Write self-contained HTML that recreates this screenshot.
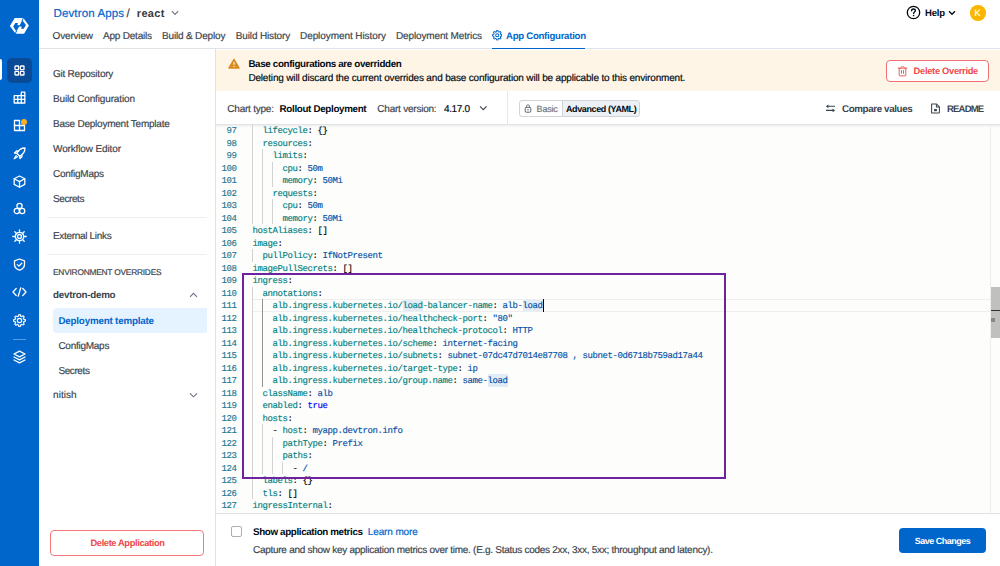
<!DOCTYPE html>
<html><head><meta charset="utf-8">
<style>
*{box-sizing:border-box;margin:0;padding:0}
html,body{width:1000px;height:566px;overflow:hidden;background:#fff;font-family:"Liberation Sans",sans-serif;color:#3b444c}
.abs{position:absolute}
.t{position:absolute;white-space:pre;line-height:1;text-rendering:geometricPrecision}
</style></head><body>
<div class="abs" style="left:0px;top:0px;width:39px;height:566px;background:#0066cc"></div>
<svg class="abs" style="left:0;top:0" width="39" height="50" viewBox="0 0 39 50">
<path d="M14.7 17.9 L23.3 17.9 L28.9 25.6 L24.1 33.7 L15.6 33.7 L9.9 26.1 Z" fill="#fff"/>
<path d="M13.2 26.4 L15.4 22.9 L18.0 22.9 L17.3 25.3 L19.7 25.3 L22.3 20.3 L25.9 25.0 L23.7 28.8 L21.0 28.8 L21.7 26.5 L19.2 26.5 L16.3 31.4 Z" fill="#0066cc"/>
<path d="M22.1 20.9 L23.6 17.4 M16.5 30.9 L15.1 34.2" stroke="#0066cc" stroke-width="1.0"/>
</svg>
<div class="abs" style="left:0px;top:59px;width:2px;height:21px;background:#fff;border-radius:0 2px 2px 0"></div>
<div class="abs" style="left:7px;top:58px;width:25px;height:24.5px;background:#0b4a96;border-radius:5px"></div>
<svg class="abs" style="left:14px;top:65px" width="11" height="11" viewBox="0 0 11 11" fill="none" stroke="#fff" stroke-width="1.3" stroke-linecap="round" stroke-linejoin="round">
<rect x="1" y="1" width="3.6" height="3.6" rx=".6"/><rect x="6.4" y="1" width="3.6" height="3.6" rx=".6"/>
<rect x="1" y="6.4" width="3.6" height="3.6" rx=".6"/><rect x="6.4" y="6.4" width="3.6" height="3.6" rx=".6"/></svg>
<svg class="abs" style="left:13px;top:91px" width="13" height="13" viewBox="0 0 13 13" fill="none" stroke="#fff" stroke-width="1.3" stroke-linecap="round" stroke-linejoin="round">
<path d="M1.2 12 L11.8 12 L11.8 1.2 L8.3 1.2 L8.3 4.7 L1.2 4.7 Z"/><path d="M1.2 8.35 L11.8 8.35 M8.3 4.7 L11.8 4.7 M4.75 4.7 L4.75 12 M8.3 4.7 L8.3 12"/></svg>
<svg class="abs" style="left:13px;top:118px" width="14" height="14" viewBox="0 0 14 14" fill="none" stroke="#fff" stroke-width="1.3" stroke-linecap="round" stroke-linejoin="round">
<path d="M1.5 6.5 L1.5 12.5 L11.5 12.5 L11.5 8.5"/><path d="M1.5 2.5 L6.5 2.5 L6.5 12.5 M1.5 7.5 L11.5 7.5"/><path d="M1.5 2.5 L1.5 7.5"/></svg>
<div class="abs" style="left:20.5px;top:118.5px;width:6px;height:6px;background:#fdb022;border-radius:50%"></div>
<svg class="abs" style="left:13px;top:147px" width="13" height="13" viewBox="0 0 13 13" fill="none" stroke="#fff" stroke-width="1.3" stroke-linecap="round" stroke-linejoin="round">
<path d="M12 1 C8 1 5.5 3 3.8 6.3 L6.7 9.2 C10 7.5 12 5 12 1 Z"/><path d="M3.8 6.3 L1.5 6 L3.5 4 L5.5 4.2 M6.7 9.2 L7 11.5 L9 9.5 L8.8 7.5"/><path d="M3.2 8.5 L1.2 11.8 L4.5 9.8"/></svg>
<svg class="abs" style="left:13px;top:175px" width="13" height="13" viewBox="0 0 13 13" fill="none" stroke="#fff" stroke-width="1.3" stroke-linecap="round" stroke-linejoin="round">
<path d="M6.5 1 L11.8 3.8 L11.8 9.4 L6.5 12.2 L1.2 9.4 L1.2 3.8 Z"/><path d="M1.2 3.8 L6.5 6.6 L11.8 3.8 M6.5 6.6 L6.5 12.2"/></svg>
<svg class="abs" style="left:13px;top:202px" width="13" height="13" viewBox="0 0 13 13" fill="none" stroke="#fff" stroke-width="1.3" stroke-linecap="round" stroke-linejoin="round">
<circle cx="6.5" cy="3.9" r="2.6"/><circle cx="3.8" cy="9" r="2.6"/><circle cx="9.2" cy="9" r="2.6"/></svg>
<svg class="abs" style="left:12px;top:229px" width="15" height="15" viewBox="0 0 15 15" fill="none" stroke="#fff" stroke-width="1.3" stroke-linecap="round" stroke-linejoin="round">
<circle cx="7.5" cy="7.5" r="4.2"/><circle cx="7.5" cy="7.5" r="2"/><path d="M7.5 0.8 L7.5 3.3 M7.5 11.7 L7.5 14.2 M0.8 7.5 L3.3 7.5 M11.7 7.5 L14.2 7.5 M2.8 2.8 L4.5 4.5 M10.5 10.5 L12.2 12.2 M2.8 12.2 L4.5 10.5 M10.5 4.5 L12.2 2.8"/></svg>
<svg class="abs" style="left:13px;top:258px" width="13" height="13" viewBox="0 0 13 13" fill="none" stroke="#fff" stroke-width="1.3" stroke-linecap="round" stroke-linejoin="round">
<path d="M6.5 1 L11.5 2.8 L11.5 6.5 C11.5 9.2 9.2 11.2 6.5 12.2 C3.8 11.2 1.5 9.2 1.5 6.5 L1.5 2.8 Z"/><path d="M4.3 6.6 L5.9 8.1 L8.8 5.2"/></svg>
<svg class="abs" style="left:12px;top:287px" width="15" height="10" viewBox="0 0 15 10" fill="none" stroke="#fff" stroke-width="1.3" stroke-linecap="round" stroke-linejoin="round">
<path d="M4.2 1.5 L1 5 L4.2 8.5 M10.8 1.5 L14 5 L10.8 8.5 M8.8 0.8 L6.2 9.2"/></svg>
<svg class="abs" style="left:13px;top:313.5px" width="13" height="13" viewBox="0 0 24 24" fill="none" stroke="#fff" stroke-width="2.2"><circle cx="12" cy="12" r="4"/><path d="M19.4 15a1.65 1.65 0 0 0 .33 1.82l.06.06a2 2 0 0 1 0 2.83 2 2 0 0 1-2.83 0l-.06-.06a1.650 1.65 0 0 0-1.82-.33 1.65 1.65 0 0 0-1 1.51V21a2 2 0 0 1-2 2 2 2 0 0 1-2-2v-.09A1.65 1.65 0 0 0 9 19.4a1.65 1.65 0 0 0-1.82.33l-.06.06a2 2 0 0 1-2.83 0 2 2 0 0 1 0-2.830l.06-.06a1.65 1.65 0 0 0 .33-1.82 1.65 1.65 0 0 0-1.51-1H3a2 2 0 0 1-2-2 2 2 0 0 1 2-2h.09A1.65 1.65 0 0 0 4.6 9a1.65 1.65 0 0 0-.33-1.82l-.06-.06a2 2 0 0 1 0-2.83 2 2 0 0 1 2.83 0l.06.06a1.65 1.65 0 0 0 1.82.33H9a1.65 1.65 0 0 0 1-1.51V3a2 2 0 0 1 2-2 2 2 0 0 1 2 2v.09a1.65 1.65 0 0 0 1 1.51 1.65 1.65 0 0 0 1.82-.33l.06-.06a2 2 0 0 1 2.83 0 2 2 0 0 1 0 2.83l-.06.06a1.65 1.65 0 0 0-.33 1.82V9a1.65 1.65 0 0 0 1.51 1H21a2 2 0 0 1 2 2 2 2 0 0 1-2 2h-.09a1.65 1.65 0 0 0-1.51 1z"/></svg>
<div class="abs" style="left:13px;top:339px;width:13px;height:1px;background:rgba(255,255,255,.35)"></div>
<svg class="abs" style="left:13px;top:350px" width="13" height="15" viewBox="0 0 13 15" fill="none" stroke="#fff" stroke-width="1.3" stroke-linecap="round" stroke-linejoin="round">
<path d="M6.5 1.2 L12 4 L6.5 6.8 L1 4 Z"/><path d="M1 7 L6.5 9.8 L12 7 M1 10 L6.5 12.8 L12 10"/></svg>
<div class="abs" style="left:39px;top:0px;width:961px;height:49px;background:#fff;border-bottom:1px solid #dfe3e8"></div>
<div class="t" style="left:53.50px;top:8.70px;font-size:11.5px;font-weight:400;color:#0066cc;letter-spacing:0.141px;-webkit-text-stroke:0.18px currentColor;">Devtron Apps</div>
<div class="t" style="left:126.50px;top:7.70px;font-size:11.6px;font-weight:400;color:#3b444c;-webkit-text-stroke:0.18px currentColor;">/</div>
<div class="t" style="left:136.80px;top:8.70px;font-size:11px;font-weight:700;color:#363b41;letter-spacing:0.326px;">react</div>
<svg class="abs" style="left:171px;top:10px" width="8" height="6" viewBox="0 0 8 6"><path d="M0.8 1.2 L4 4.4 L7.2 1.2" fill="none" stroke="#6b7280" stroke-width="1.1"/></svg>
<div class="t" style="left:52.60px;top:32.30px;font-size:10px;font-weight:400;color:#3b444c;letter-spacing:-0.184px;-webkit-text-stroke:0.18px currentColor;">Overview</div>
<div class="t" style="left:103.00px;top:32.30px;font-size:10px;font-weight:400;color:#3b444c;letter-spacing:-0.214px;-webkit-text-stroke:0.18px currentColor;">App Details</div>
<div class="t" style="left:162.00px;top:32.30px;font-size:10px;font-weight:400;color:#3b444c;letter-spacing:-0.169px;-webkit-text-stroke:0.18px currentColor;">Build &amp; Deploy</div>
<div class="t" style="left:235.80px;top:32.30px;font-size:10px;font-weight:400;color:#3b444c;letter-spacing:-0.145px;-webkit-text-stroke:0.18px currentColor;">Build History</div>
<div class="t" style="left:300.00px;top:32.30px;font-size:10px;font-weight:400;color:#3b444c;letter-spacing:-0.074px;-webkit-text-stroke:0.18px currentColor;">Deployment History</div>
<div class="t" style="left:396.00px;top:32.30px;font-size:10px;font-weight:400;color:#3b444c;letter-spacing:-0.139px;-webkit-text-stroke:0.18px currentColor;">Deployment Metrics</div>
<svg class="abs" style="left:491.5px;top:30.3px" width="10.5" height="10.5" viewBox="0 0 24 24" fill="none" stroke="#0066cc" stroke-width="2.3"><circle cx="12" cy="12" r="3.6"/><path d="M19.4 15a1.65 1.65 0 0 0 .33 1.82l.06.06a2 2 0 0 1 0 2.83 2 2 0 0 1-2.83 0l-.06-.06a1.650 1.65 0 0 0-1.82-.33 1.65 1.65 0 0 0-1 1.51V21a2 2 0 0 1-2 2 2 2 0 0 1-2-2v-.09A1.65 1.65 0 0 0 9 19.4a1.65 1.65 0 0 0-1.82.33l-.06.06a2 2 0 0 1-2.83 0 2 2 0 0 1 0-2.830l.06-.06a1.65 1.65 0 0 0 .33-1.82 1.65 1.65 0 0 0-1.51-1H3a2 2 0 0 1-2-2 2 2 0 0 1 2-2h.09A1.65 1.65 0 0 0 4.6 9a1.65 1.65 0 0 0-.33-1.82l-.06-.06a2 2 0 0 1 0-2.83 2 2 0 0 1 2.83 0l.06.06a1.65 1.65 0 0 0 1.82.33H9a1.65 1.65 0 0 0 1-1.51V3a2 2 0 0 1 2-2 2 2 0 0 1 2 2v.09a1.65 1.65 0 0 0 1 1.51 1.65 1.65 0 0 0 1.82-.33l.06-.06a2 2 0 0 1 2.83 0 2 2 0 0 1 0 2.83l-.06.06a1.65 1.65 0 0 0-.33 1.82V9a1.65 1.65 0 0 0 1.51 1H21a2 2 0 0 1 2 2 2 2 0 0 1-2 2h-.09a1.65 1.65 0 0 0-1.51 1z"/></svg>
<div class="t" style="left:506.00px;top:32.30px;font-size:9.6px;font-weight:700;color:#0066cc;letter-spacing:-0.263px;">App Configuration</div>
<div class="abs" style="left:492px;top:47.6px;width:93px;height:1.8px;background:#0066cc"></div>
<svg class="abs" style="left:906px;top:5px" width="15" height="15" viewBox="0 0 15 15"><circle cx="7.5" cy="7.5" r="6.2" fill="none" stroke="#000a14" stroke-width="1.3"/><path d="M5.6 5.8 C5.6 4.6 6.5 4 7.5 4 C8.6 4 9.4 4.7 9.4 5.6 C9.4 6.8 7.6 7 7.6 8.4" fill="none" stroke="#000a14" stroke-width="1.3" stroke-linecap="round"/><circle cx="7.6" cy="10.6" r=".8" fill="#000a14"/></svg>
<div class="t" style="left:925.00px;top:9.00px;font-size:9.5px;font-weight:700;color:#000a14;letter-spacing:-0.198px;">Help</div>
<svg class="abs" style="left:948px;top:10px" width="8" height="6" viewBox="0 0 8 6"><path d="M1 1.3 L4 4.3 L7 1.3" fill="none" stroke="#000a14" stroke-width="1.3"/></svg>
<div class="abs" style="left:970px;top:5px;width:15.5px;height:15.5px;background:#fbb700;border-radius:50%"></div>
<div class="t" style="left:974.50px;top:9.20px;font-size:9px;font-weight:400;color:#fff;-webkit-text-stroke:0.18px currentColor;">K</div>
<div class="abs" style="left:39px;top:49px;width:177px;height:517px;background:#fff;border-right:1px solid #dfe3e8"></div>
<div class="t" style="left:53.00px;top:70.20px;font-size:10px;font-weight:400;color:#3b444c;letter-spacing:-0.235px;-webkit-text-stroke:0.18px currentColor;">Git Repository</div>
<div class="t" style="left:53.00px;top:95.20px;font-size:10px;font-weight:400;color:#3b444c;letter-spacing:-0.139px;-webkit-text-stroke:0.18px currentColor;">Build Configuration</div>
<div class="t" style="left:53.00px;top:120.20px;font-size:10px;font-weight:400;color:#3b444c;letter-spacing:-0.231px;-webkit-text-stroke:0.18px currentColor;">Base Deployment Template</div>
<div class="t" style="left:53.00px;top:145.20px;font-size:10px;font-weight:400;color:#3b444c;letter-spacing:-0.132px;-webkit-text-stroke:0.18px currentColor;">Workflow Editor</div>
<div class="t" style="left:53.00px;top:170.20px;font-size:10px;font-weight:400;color:#3b444c;letter-spacing:-0.262px;-webkit-text-stroke:0.18px currentColor;">ConfigMaps</div>
<div class="t" style="left:53.00px;top:195.20px;font-size:10px;font-weight:400;color:#3b444c;letter-spacing:-0.401px;-webkit-text-stroke:0.18px currentColor;">Secrets</div>
<div class="abs" style="left:47px;top:216.5px;width:160px;height:1px;background:#eef0f2"></div>
<div class="t" style="left:53.00px;top:232.00px;font-size:10px;font-weight:400;color:#3b444c;letter-spacing:-0.316px;-webkit-text-stroke:0.18px currentColor;">External Links</div>
<div class="abs" style="left:47px;top:254px;width:160px;height:1px;background:#eef0f2"></div>
<div class="t" style="left:53.00px;top:268.20px;font-size:8.4px;font-weight:400;color:#3b444c;letter-spacing:-0.240px;-webkit-text-stroke:0.18px currentColor;">ENVIRONMENT OVERRIDES</div>
<div class="t" style="left:53.00px;top:291.40px;font-size:9.8px;font-weight:700;color:#3b444c;letter-spacing:-0.248px;">devtron-demo</div>
<svg class="abs" style="left:188.5px;top:292px" width="9" height="6" viewBox="0 0 9 6"><path d="M1 4.8 L4.5 1.3 L8 4.8" fill="none" stroke="#6b7280" stroke-width="1.1"/></svg>
<div class="abs" style="left:53px;top:308px;width:154px;height:24.5px;background:#e5f2ff;border-radius:4px 0 0 4px"></div>
<div class="t" style="left:58.40px;top:316.50px;font-size:9.8px;font-weight:700;color:#0066cc;letter-spacing:-0.189px;">Deployment template</div>
<div class="t" style="left:58.40px;top:341.50px;font-size:10px;font-weight:400;color:#3b444c;letter-spacing:-0.262px;-webkit-text-stroke:0.18px currentColor;">ConfigMaps</div>
<div class="t" style="left:58.40px;top:366.50px;font-size:10px;font-weight:400;color:#3b444c;letter-spacing:-0.401px;-webkit-text-stroke:0.18px currentColor;">Secrets</div>
<div class="t" style="left:53.00px;top:391.30px;font-size:10px;font-weight:400;color:#3b444c;letter-spacing:0.068px;-webkit-text-stroke:0.18px currentColor;">nitish</div>
<svg class="abs" style="left:188.5px;top:392px" width="9" height="6" viewBox="0 0 9 6"><path d="M1 1.3 L4.5 4.8 L8 1.3" fill="none" stroke="#6b7280" stroke-width="1.1"/></svg>
<div class="abs" style="left:50px;top:530px;width:154px;height:25.5px;border:1px solid #f27a7a;border-radius:4px;background:#fff"></div>
<div class="t" style="left:90.50px;top:539.20px;font-size:9.3px;font-weight:700;color:#f04848;letter-spacing:-0.374px;">Delete Application</div>
<div class="abs" style="left:216px;top:50px;width:784px;height:41px;background:#fef5e6"></div>
<svg class="abs" style="left:228px;top:58px" width="12" height="11" viewBox="0 0 12 11"><path d="M6 1.3 L11.1 10.1 L0.9 10.1 Z" fill="#d98c1f" stroke="#d98c1f" stroke-width="1.3" stroke-linejoin="round"/><rect x="5.4" y="4" width="1.2" height="2.8" fill="#fef5e6"/><rect x="5.4" y="7.9" width="1.2" height="1.1" fill="#fef5e6"/></svg>
<div class="t" style="left:248.40px;top:60.30px;font-size:9.8px;font-weight:700;color:#000a14;letter-spacing:-0.351px;">Base configurations are overridden</div>
<div class="t" style="left:248.40px;top:74.20px;font-size:10px;font-weight:400;color:#000a14;letter-spacing:-0.174px;-webkit-text-stroke:0.18px currentColor;">Deleting will discard the current overrides and base configuration will be applicable to this environment.</div>
<div class="abs" style="left:885.5px;top:60px;width:103.5px;height:21.5px;border:1px solid #f17171;border-radius:4px;background:#fff"></div>
<svg class="abs" style="left:897px;top:64.8px" width="11" height="12" viewBox="0 0 11 12" fill="none" stroke="#f05252" stroke-width="0.95" stroke-linecap="round" stroke-linejoin="round"><path d="M1.2 3.2 L9.8 3.2 M3.4 3.1 C3.6 0.9 7.4 0.9 7.6 3.1 M2.2 3.2 L2.2 10 Q2.2 10.9 3.1 10.9 L7.9 10.9 Q8.8 10.9 8.8 10 L8.8 3.2 M4.5 5.5 L4.5 8.3 M6.5 5.5 L6.5 8.3"/></svg>
<div class="t" style="left:913.60px;top:67.00px;font-size:9.3px;font-weight:700;color:#f04848;letter-spacing:-0.288px;">Delete Override</div>
<div class="abs" style="left:216px;top:91px;width:784px;height:34px;background:#fff;border-bottom:1px solid #dfe3e8"></div>
<div class="t" style="left:227.30px;top:104.80px;font-size:10px;font-weight:400;color:#3b444c;letter-spacing:-0.222px;-webkit-text-stroke:0.18px currentColor;">Chart type:</div>
<div class="t" style="left:279.60px;top:104.80px;font-size:9.8px;font-weight:700;color:#000a14;letter-spacing:-0.325px;">Rollout Deployment</div>
<div class="t" style="left:377.30px;top:104.80px;font-size:10px;font-weight:400;color:#3b444c;letter-spacing:-0.227px;-webkit-text-stroke:0.18px currentColor;">Chart version:</div>
<div class="t" style="left:444.00px;top:104.80px;font-size:10px;font-weight:400;color:#000a14;letter-spacing:-0.362px;-webkit-text-stroke:0.18px currentColor;">4.17.0</div>
<svg class="abs" style="left:479px;top:105px" width="9" height="6" viewBox="0 0 9 6"><path d="M1 1.3 L4.3 4.6 L7.6 1.3" fill="none" stroke="#3b444c" stroke-width="1.1"/></svg>
<div class="abs" style="left:507px;top:91px;width:1px;height:34px;background:#e5e7eb"></div>
<div class="abs" style="left:519px;top:100.2px;width:121px;height:16.4px;border:1px solid #d0d4d9;border-radius:3px;background:#fff"></div>
<div class="abs" style="left:561.5px;top:101.2px;width:77.5px;height:14.4px;background:#edf1f5;border-left:1px solid #d0d4d9;border-radius:0 2px 2px 0"></div>
<svg class="abs" style="left:524px;top:104px" width="8" height="9" viewBox="0 0 8 9" fill="none" stroke="#5b636b" stroke-width="1"><rect x="1.2" y="3.3" width="5.6" height="4.9" rx="1"/><path d="M2.5 3.3 L2.5 2.4 C2.5 1.5 3.1 0.9 4 0.9 C4.9 0.9 5.5 1.5 5.5 2.4 L5.5 3.3"/><path d="M4 5 L4 6.5" stroke-width="1.1"/></svg>
<div class="t" style="left:536.60px;top:104.80px;font-size:9px;font-weight:400;color:#6b7279;letter-spacing:-0.204px;-webkit-text-stroke:0.18px currentColor;">Basic</div>
<div class="t" style="left:566.00px;top:104.80px;font-size:9px;font-weight:700;color:#000a14;letter-spacing:-0.392px;">Advanced (YAML)</div>
<svg class="abs" style="left:825px;top:103px" width="11" height="10" viewBox="0 0 11 10"><path d="M2.5 3.3 L10 3.3 M1 7.4 L8.5 7.4" stroke="#3b444c" stroke-width="1.1"/><path d="M0.9 3.3 L3.4 1.4 L3.4 5.2 Z M10.1 7.4 L7.6 5.5 L7.6 9.3 Z" fill="#3b444c"/></svg>
<div class="t" style="left:842.00px;top:105.40px;font-size:9.8px;font-weight:700;color:#3b444c;letter-spacing:-0.384px;">Compare values</div>
<svg class="abs" style="left:930px;top:103px" width="11" height="11" viewBox="0 0 11 11" fill="none" stroke="#3b444c" stroke-width="1.05" stroke-linejoin="round"><path d="M1.6 1 L6.6 1 L9.4 3.8 L9.4 9.5 Q9.4 10 8.9 10 L2.1 10 Q1.6 10 1.6 9.5 Z"/><path d="M6.4 1.2 L6.4 3.9 L9.2 3.9"/><rect x="4.1" y="6" width="2.8" height="2.2" fill="#3b444c" stroke="none"/></svg>
<div class="t" style="left:946.90px;top:105.40px;font-size:9.5px;font-weight:700;color:#3b444c;letter-spacing:-0.774px;">README</div>
<div class="abs" style="left:216px;top:125px;width:784px;height:388px;background:#fdfdfc;box-shadow:inset 0 4px 3px -3px rgba(0,0,0,.08)"></div>
<div class="abs" style="left:253px;top:299.2px;width:737px;height:12.5px;border-top:1px solid #eeeeee;border-bottom:1px solid #eeeeee"></div>
<div class="abs" style="left:402.5px;top:299.7px;width:20px;height:11.5px;background:#e1ecf7"></div>
<div class="abs" style="left:522.5px;top:299.7px;width:20px;height:11.5px;background:#e1ecf7"></div>
<div class="abs" style="left:487.5px;top:374.2px;width:20px;height:12.5px;background:#e1ecf7"></div>
<div class="abs" style="left:252.0px;top:124.2px;width:1px;height:12.5px;background:#d3d3d3"></div>
<div class="abs" style="left:252.0px;top:136.7px;width:1px;height:12.5px;background:#d3d3d3"></div>
<div class="abs" style="left:252.0px;top:149.2px;width:1px;height:12.5px;background:#d3d3d3"></div>
<div class="abs" style="left:262.0px;top:149.2px;width:1px;height:12.5px;background:#d3d3d3"></div>
<div class="abs" style="left:252.0px;top:161.7px;width:1px;height:12.5px;background:#d3d3d3"></div>
<div class="abs" style="left:262.0px;top:161.7px;width:1px;height:12.5px;background:#d3d3d3"></div>
<div class="abs" style="left:272.0px;top:161.7px;width:1px;height:12.5px;background:#d3d3d3"></div>
<div class="abs" style="left:252.0px;top:174.2px;width:1px;height:12.5px;background:#d3d3d3"></div>
<div class="abs" style="left:262.0px;top:174.2px;width:1px;height:12.5px;background:#d3d3d3"></div>
<div class="abs" style="left:272.0px;top:174.2px;width:1px;height:12.5px;background:#d3d3d3"></div>
<div class="abs" style="left:252.0px;top:186.7px;width:1px;height:12.5px;background:#d3d3d3"></div>
<div class="abs" style="left:262.0px;top:186.7px;width:1px;height:12.5px;background:#d3d3d3"></div>
<div class="abs" style="left:252.0px;top:199.2px;width:1px;height:12.5px;background:#d3d3d3"></div>
<div class="abs" style="left:262.0px;top:199.2px;width:1px;height:12.5px;background:#d3d3d3"></div>
<div class="abs" style="left:272.0px;top:199.2px;width:1px;height:12.5px;background:#d3d3d3"></div>
<div class="abs" style="left:252.0px;top:211.7px;width:1px;height:12.5px;background:#d3d3d3"></div>
<div class="abs" style="left:262.0px;top:211.7px;width:1px;height:12.5px;background:#d3d3d3"></div>
<div class="abs" style="left:272.0px;top:211.7px;width:1px;height:12.5px;background:#d3d3d3"></div>
<div class="abs" style="left:252.0px;top:249.2px;width:1px;height:12.5px;background:#d3d3d3"></div>
<div class="abs" style="left:252.0px;top:286.7px;width:1px;height:12.5px;background:#d3d3d3"></div>
<div class="abs" style="left:252.0px;top:299.2px;width:1px;height:12.5px;background:#d3d3d3"></div>
<div class="abs" style="left:262.0px;top:299.2px;width:1px;height:12.5px;background:#939393"></div>
<div class="abs" style="left:252.0px;top:311.7px;width:1px;height:12.5px;background:#d3d3d3"></div>
<div class="abs" style="left:262.0px;top:311.7px;width:1px;height:12.5px;background:#939393"></div>
<div class="abs" style="left:252.0px;top:324.2px;width:1px;height:12.5px;background:#d3d3d3"></div>
<div class="abs" style="left:262.0px;top:324.2px;width:1px;height:12.5px;background:#939393"></div>
<div class="abs" style="left:252.0px;top:336.7px;width:1px;height:12.5px;background:#d3d3d3"></div>
<div class="abs" style="left:262.0px;top:336.7px;width:1px;height:12.5px;background:#939393"></div>
<div class="abs" style="left:252.0px;top:349.2px;width:1px;height:12.5px;background:#d3d3d3"></div>
<div class="abs" style="left:262.0px;top:349.2px;width:1px;height:12.5px;background:#939393"></div>
<div class="abs" style="left:252.0px;top:361.7px;width:1px;height:12.5px;background:#d3d3d3"></div>
<div class="abs" style="left:262.0px;top:361.7px;width:1px;height:12.5px;background:#939393"></div>
<div class="abs" style="left:252.0px;top:374.2px;width:1px;height:12.5px;background:#d3d3d3"></div>
<div class="abs" style="left:262.0px;top:374.2px;width:1px;height:12.5px;background:#939393"></div>
<div class="abs" style="left:252.0px;top:386.7px;width:1px;height:12.5px;background:#d3d3d3"></div>
<div class="abs" style="left:252.0px;top:399.2px;width:1px;height:12.5px;background:#d3d3d3"></div>
<div class="abs" style="left:252.0px;top:411.7px;width:1px;height:12.5px;background:#d3d3d3"></div>
<div class="abs" style="left:252.0px;top:424.2px;width:1px;height:12.5px;background:#d3d3d3"></div>
<div class="abs" style="left:262.0px;top:424.2px;width:1px;height:12.5px;background:#d3d3d3"></div>
<div class="abs" style="left:252.0px;top:436.7px;width:1px;height:12.5px;background:#d3d3d3"></div>
<div class="abs" style="left:262.0px;top:436.7px;width:1px;height:12.5px;background:#d3d3d3"></div>
<div class="abs" style="left:272.0px;top:436.7px;width:1px;height:12.5px;background:#d3d3d3"></div>
<div class="abs" style="left:252.0px;top:449.2px;width:1px;height:12.5px;background:#d3d3d3"></div>
<div class="abs" style="left:262.0px;top:449.2px;width:1px;height:12.5px;background:#d3d3d3"></div>
<div class="abs" style="left:272.0px;top:449.2px;width:1px;height:12.5px;background:#d3d3d3"></div>
<div class="abs" style="left:252.0px;top:461.7px;width:1px;height:12.5px;background:#d3d3d3"></div>
<div class="abs" style="left:262.0px;top:461.7px;width:1px;height:12.5px;background:#d3d3d3"></div>
<div class="abs" style="left:272.0px;top:461.7px;width:1px;height:12.5px;background:#d3d3d3"></div>
<div class="abs" style="left:282.0px;top:461.7px;width:1px;height:12.5px;background:#d3d3d3"></div>
<div class="abs" style="left:252.0px;top:474.2px;width:1px;height:12.5px;background:#d3d3d3"></div>
<div class="abs" style="left:252.0px;top:486.7px;width:1px;height:12.5px;background:#d3d3d3"></div>
<div class="t" style="left:226.60px;top:127.00px;font-size:9.0px;font-weight:400;color:#237893;font-family:'Liberation Mono',monospace;letter-spacing:-0.4px;-webkit-text-stroke:0.15px">97</div>
<div class="t" style="left:262.50px;top:127.00px;font-size:9.0px;font-weight:400;color:#008080;font-family:'Liberation Mono',monospace;letter-spacing:-0.4px;-webkit-text-stroke:0.15px">lifecycle</div>
<div class="t" style="left:307.50px;top:127.00px;font-size:9.0px;font-weight:400;color:#000000;font-family:'Liberation Mono',monospace;letter-spacing:-0.4px;-webkit-text-stroke:0.15px">:</div>
<div class="t" style="left:317.50px;top:127.00px;font-size:9.0px;font-weight:400;color:#000000;font-family:'Liberation Mono',monospace;letter-spacing:-0.4px;-webkit-text-stroke:0.15px">{}</div>
<div class="t" style="left:226.60px;top:139.50px;font-size:9.0px;font-weight:400;color:#237893;font-family:'Liberation Mono',monospace;letter-spacing:-0.4px;-webkit-text-stroke:0.15px">98</div>
<div class="t" style="left:262.50px;top:139.50px;font-size:9.0px;font-weight:400;color:#008080;font-family:'Liberation Mono',monospace;letter-spacing:-0.4px;-webkit-text-stroke:0.15px">resources</div>
<div class="t" style="left:307.50px;top:139.50px;font-size:9.0px;font-weight:400;color:#000000;font-family:'Liberation Mono',monospace;letter-spacing:-0.4px;-webkit-text-stroke:0.15px">:</div>
<div class="t" style="left:226.60px;top:152.00px;font-size:9.0px;font-weight:400;color:#237893;font-family:'Liberation Mono',monospace;letter-spacing:-0.4px;-webkit-text-stroke:0.15px">99</div>
<div class="t" style="left:272.50px;top:152.00px;font-size:9.0px;font-weight:400;color:#008080;font-family:'Liberation Mono',monospace;letter-spacing:-0.4px;-webkit-text-stroke:0.15px">limits</div>
<div class="t" style="left:302.50px;top:152.00px;font-size:9.0px;font-weight:400;color:#000000;font-family:'Liberation Mono',monospace;letter-spacing:-0.4px;-webkit-text-stroke:0.15px">:</div>
<div class="t" style="left:221.60px;top:164.50px;font-size:9.0px;font-weight:400;color:#237893;font-family:'Liberation Mono',monospace;letter-spacing:-0.4px;-webkit-text-stroke:0.15px">100</div>
<div class="t" style="left:282.50px;top:164.50px;font-size:9.0px;font-weight:400;color:#008080;font-family:'Liberation Mono',monospace;letter-spacing:-0.4px;-webkit-text-stroke:0.15px">cpu</div>
<div class="t" style="left:297.50px;top:164.50px;font-size:9.0px;font-weight:400;color:#000000;font-family:'Liberation Mono',monospace;letter-spacing:-0.4px;-webkit-text-stroke:0.15px">:</div>
<div class="t" style="left:307.50px;top:164.50px;font-size:9.0px;font-weight:400;color:#0451a5;font-family:'Liberation Mono',monospace;letter-spacing:-0.4px;-webkit-text-stroke:0.15px">50m</div>
<div class="t" style="left:221.60px;top:177.00px;font-size:9.0px;font-weight:400;color:#237893;font-family:'Liberation Mono',monospace;letter-spacing:-0.4px;-webkit-text-stroke:0.15px">101</div>
<div class="t" style="left:282.50px;top:177.00px;font-size:9.0px;font-weight:400;color:#008080;font-family:'Liberation Mono',monospace;letter-spacing:-0.4px;-webkit-text-stroke:0.15px">memory</div>
<div class="t" style="left:312.50px;top:177.00px;font-size:9.0px;font-weight:400;color:#000000;font-family:'Liberation Mono',monospace;letter-spacing:-0.4px;-webkit-text-stroke:0.15px">:</div>
<div class="t" style="left:322.50px;top:177.00px;font-size:9.0px;font-weight:400;color:#0451a5;font-family:'Liberation Mono',monospace;letter-spacing:-0.4px;-webkit-text-stroke:0.15px">50Mi</div>
<div class="t" style="left:221.60px;top:189.50px;font-size:9.0px;font-weight:400;color:#237893;font-family:'Liberation Mono',monospace;letter-spacing:-0.4px;-webkit-text-stroke:0.15px">102</div>
<div class="t" style="left:272.50px;top:189.50px;font-size:9.0px;font-weight:400;color:#008080;font-family:'Liberation Mono',monospace;letter-spacing:-0.4px;-webkit-text-stroke:0.15px">requests</div>
<div class="t" style="left:312.50px;top:189.50px;font-size:9.0px;font-weight:400;color:#000000;font-family:'Liberation Mono',monospace;letter-spacing:-0.4px;-webkit-text-stroke:0.15px">:</div>
<div class="t" style="left:221.60px;top:202.00px;font-size:9.0px;font-weight:400;color:#237893;font-family:'Liberation Mono',monospace;letter-spacing:-0.4px;-webkit-text-stroke:0.15px">103</div>
<div class="t" style="left:282.50px;top:202.00px;font-size:9.0px;font-weight:400;color:#008080;font-family:'Liberation Mono',monospace;letter-spacing:-0.4px;-webkit-text-stroke:0.15px">cpu</div>
<div class="t" style="left:297.50px;top:202.00px;font-size:9.0px;font-weight:400;color:#000000;font-family:'Liberation Mono',monospace;letter-spacing:-0.4px;-webkit-text-stroke:0.15px">:</div>
<div class="t" style="left:307.50px;top:202.00px;font-size:9.0px;font-weight:400;color:#0451a5;font-family:'Liberation Mono',monospace;letter-spacing:-0.4px;-webkit-text-stroke:0.15px">50m</div>
<div class="t" style="left:221.60px;top:214.50px;font-size:9.0px;font-weight:400;color:#237893;font-family:'Liberation Mono',monospace;letter-spacing:-0.4px;-webkit-text-stroke:0.15px">104</div>
<div class="t" style="left:282.50px;top:214.50px;font-size:9.0px;font-weight:400;color:#008080;font-family:'Liberation Mono',monospace;letter-spacing:-0.4px;-webkit-text-stroke:0.15px">memory</div>
<div class="t" style="left:312.50px;top:214.50px;font-size:9.0px;font-weight:400;color:#000000;font-family:'Liberation Mono',monospace;letter-spacing:-0.4px;-webkit-text-stroke:0.15px">:</div>
<div class="t" style="left:322.50px;top:214.50px;font-size:9.0px;font-weight:400;color:#0451a5;font-family:'Liberation Mono',monospace;letter-spacing:-0.4px;-webkit-text-stroke:0.15px">50Mi</div>
<div class="t" style="left:221.60px;top:227.00px;font-size:9.0px;font-weight:400;color:#237893;font-family:'Liberation Mono',monospace;letter-spacing:-0.4px;-webkit-text-stroke:0.15px">105</div>
<div class="t" style="left:252.50px;top:227.00px;font-size:9.0px;font-weight:400;color:#008080;font-family:'Liberation Mono',monospace;letter-spacing:-0.4px;-webkit-text-stroke:0.15px">hostAliases</div>
<div class="t" style="left:307.50px;top:227.00px;font-size:9.0px;font-weight:400;color:#000000;font-family:'Liberation Mono',monospace;letter-spacing:-0.4px;-webkit-text-stroke:0.15px">:</div>
<div class="t" style="left:317.50px;top:227.00px;font-size:9.0px;font-weight:400;color:#000000;font-family:'Liberation Mono',monospace;letter-spacing:-0.4px;-webkit-text-stroke:0.15px">[]</div>
<div class="t" style="left:221.60px;top:239.50px;font-size:9.0px;font-weight:400;color:#237893;font-family:'Liberation Mono',monospace;letter-spacing:-0.4px;-webkit-text-stroke:0.15px">106</div>
<div class="t" style="left:252.50px;top:239.50px;font-size:9.0px;font-weight:400;color:#008080;font-family:'Liberation Mono',monospace;letter-spacing:-0.4px;-webkit-text-stroke:0.15px">image</div>
<div class="t" style="left:277.50px;top:239.50px;font-size:9.0px;font-weight:400;color:#000000;font-family:'Liberation Mono',monospace;letter-spacing:-0.4px;-webkit-text-stroke:0.15px">:</div>
<div class="t" style="left:221.60px;top:252.00px;font-size:9.0px;font-weight:400;color:#237893;font-family:'Liberation Mono',monospace;letter-spacing:-0.4px;-webkit-text-stroke:0.15px">107</div>
<div class="t" style="left:262.50px;top:252.00px;font-size:9.0px;font-weight:400;color:#008080;font-family:'Liberation Mono',monospace;letter-spacing:-0.4px;-webkit-text-stroke:0.15px">pullPolicy</div>
<div class="t" style="left:312.50px;top:252.00px;font-size:9.0px;font-weight:400;color:#000000;font-family:'Liberation Mono',monospace;letter-spacing:-0.4px;-webkit-text-stroke:0.15px">:</div>
<div class="t" style="left:322.50px;top:252.00px;font-size:9.0px;font-weight:400;color:#0451a5;font-family:'Liberation Mono',monospace;letter-spacing:-0.4px;-webkit-text-stroke:0.15px">IfNotPresent</div>
<div class="t" style="left:221.60px;top:264.50px;font-size:9.0px;font-weight:400;color:#237893;font-family:'Liberation Mono',monospace;letter-spacing:-0.4px;-webkit-text-stroke:0.15px">108</div>
<div class="t" style="left:252.50px;top:264.50px;font-size:9.0px;font-weight:400;color:#008080;font-family:'Liberation Mono',monospace;letter-spacing:-0.4px;-webkit-text-stroke:0.15px">imagePullSecrets</div>
<div class="t" style="left:332.50px;top:264.50px;font-size:9.0px;font-weight:400;color:#000000;font-family:'Liberation Mono',monospace;letter-spacing:-0.4px;-webkit-text-stroke:0.15px">:</div>
<div class="t" style="left:342.50px;top:264.50px;font-size:9.0px;font-weight:400;color:#000000;font-family:'Liberation Mono',monospace;letter-spacing:-0.4px;-webkit-text-stroke:0.15px">[]</div>
<div class="t" style="left:221.60px;top:277.00px;font-size:9.0px;font-weight:400;color:#237893;font-family:'Liberation Mono',monospace;letter-spacing:-0.4px;-webkit-text-stroke:0.15px">109</div>
<div class="t" style="left:252.50px;top:277.00px;font-size:9.0px;font-weight:400;color:#008080;font-family:'Liberation Mono',monospace;letter-spacing:-0.4px;-webkit-text-stroke:0.15px">ingress</div>
<div class="t" style="left:287.50px;top:277.00px;font-size:9.0px;font-weight:400;color:#000000;font-family:'Liberation Mono',monospace;letter-spacing:-0.4px;-webkit-text-stroke:0.15px">:</div>
<div class="t" style="left:221.60px;top:289.50px;font-size:9.0px;font-weight:400;color:#237893;font-family:'Liberation Mono',monospace;letter-spacing:-0.4px;-webkit-text-stroke:0.15px">110</div>
<div class="t" style="left:262.50px;top:289.50px;font-size:9.0px;font-weight:400;color:#008080;font-family:'Liberation Mono',monospace;letter-spacing:-0.4px;-webkit-text-stroke:0.15px">annotations</div>
<div class="t" style="left:317.50px;top:289.50px;font-size:9.0px;font-weight:400;color:#000000;font-family:'Liberation Mono',monospace;letter-spacing:-0.4px;-webkit-text-stroke:0.15px">:</div>
<div class="t" style="left:221.60px;top:302.00px;font-size:9.0px;font-weight:400;color:#237893;font-family:'Liberation Mono',monospace;letter-spacing:-0.4px;-webkit-text-stroke:0.15px">111</div>
<div class="t" style="left:272.50px;top:302.00px;font-size:9.0px;font-weight:400;color:#008080;font-family:'Liberation Mono',monospace;letter-spacing:-0.4px;-webkit-text-stroke:0.15px">alb.ingress.kubernetes.io/load-balancer-name</div>
<div class="t" style="left:492.50px;top:302.00px;font-size:9.0px;font-weight:400;color:#000000;font-family:'Liberation Mono',monospace;letter-spacing:-0.4px;-webkit-text-stroke:0.15px">:</div>
<div class="t" style="left:502.50px;top:302.00px;font-size:9.0px;font-weight:400;color:#0451a5;font-family:'Liberation Mono',monospace;letter-spacing:-0.4px;-webkit-text-stroke:0.15px">alb-load</div>
<div class="t" style="left:221.60px;top:314.50px;font-size:9.0px;font-weight:400;color:#237893;font-family:'Liberation Mono',monospace;letter-spacing:-0.4px;-webkit-text-stroke:0.15px">112</div>
<div class="t" style="left:272.50px;top:314.50px;font-size:9.0px;font-weight:400;color:#008080;font-family:'Liberation Mono',monospace;letter-spacing:-0.4px;-webkit-text-stroke:0.15px">alb.ingress.kubernetes.io/healthcheck-port</div>
<div class="t" style="left:482.50px;top:314.50px;font-size:9.0px;font-weight:400;color:#000000;font-family:'Liberation Mono',monospace;letter-spacing:-0.4px;-webkit-text-stroke:0.15px">:</div>
<div class="t" style="left:492.50px;top:314.50px;font-size:9.0px;font-weight:400;color:#0451a5;font-family:'Liberation Mono',monospace;letter-spacing:-0.4px;-webkit-text-stroke:0.15px">&quot;80&quot;</div>
<div class="t" style="left:221.60px;top:327.00px;font-size:9.0px;font-weight:400;color:#237893;font-family:'Liberation Mono',monospace;letter-spacing:-0.4px;-webkit-text-stroke:0.15px">113</div>
<div class="t" style="left:272.50px;top:327.00px;font-size:9.0px;font-weight:400;color:#008080;font-family:'Liberation Mono',monospace;letter-spacing:-0.4px;-webkit-text-stroke:0.15px">alb.ingress.kubernetes.io/healthcheck-protocol</div>
<div class="t" style="left:502.50px;top:327.00px;font-size:9.0px;font-weight:400;color:#000000;font-family:'Liberation Mono',monospace;letter-spacing:-0.4px;-webkit-text-stroke:0.15px">:</div>
<div class="t" style="left:512.50px;top:327.00px;font-size:9.0px;font-weight:400;color:#0451a5;font-family:'Liberation Mono',monospace;letter-spacing:-0.4px;-webkit-text-stroke:0.15px">HTTP</div>
<div class="t" style="left:221.60px;top:339.50px;font-size:9.0px;font-weight:400;color:#237893;font-family:'Liberation Mono',monospace;letter-spacing:-0.4px;-webkit-text-stroke:0.15px">114</div>
<div class="t" style="left:272.50px;top:339.50px;font-size:9.0px;font-weight:400;color:#008080;font-family:'Liberation Mono',monospace;letter-spacing:-0.4px;-webkit-text-stroke:0.15px">alb.ingress.kubernetes.io/scheme</div>
<div class="t" style="left:432.50px;top:339.50px;font-size:9.0px;font-weight:400;color:#000000;font-family:'Liberation Mono',monospace;letter-spacing:-0.4px;-webkit-text-stroke:0.15px">:</div>
<div class="t" style="left:442.50px;top:339.50px;font-size:9.0px;font-weight:400;color:#0451a5;font-family:'Liberation Mono',monospace;letter-spacing:-0.4px;-webkit-text-stroke:0.15px">internet-facing</div>
<div class="t" style="left:221.60px;top:352.00px;font-size:9.0px;font-weight:400;color:#237893;font-family:'Liberation Mono',monospace;letter-spacing:-0.4px;-webkit-text-stroke:0.15px">115</div>
<div class="t" style="left:272.50px;top:352.00px;font-size:9.0px;font-weight:400;color:#008080;font-family:'Liberation Mono',monospace;letter-spacing:-0.4px;-webkit-text-stroke:0.15px">alb.ingress.kubernetes.io/subnets</div>
<div class="t" style="left:437.50px;top:352.00px;font-size:9.0px;font-weight:400;color:#000000;font-family:'Liberation Mono',monospace;letter-spacing:-0.4px;-webkit-text-stroke:0.15px">:</div>
<div class="t" style="left:447.50px;top:352.00px;font-size:9.0px;font-weight:400;color:#0451a5;font-family:'Liberation Mono',monospace;letter-spacing:-0.4px;-webkit-text-stroke:0.15px">subnet-07dc47d7014e87708 , subnet-0d6718b759ad17a44</div>
<div class="t" style="left:221.60px;top:364.50px;font-size:9.0px;font-weight:400;color:#237893;font-family:'Liberation Mono',monospace;letter-spacing:-0.4px;-webkit-text-stroke:0.15px">116</div>
<div class="t" style="left:272.50px;top:364.50px;font-size:9.0px;font-weight:400;color:#008080;font-family:'Liberation Mono',monospace;letter-spacing:-0.4px;-webkit-text-stroke:0.15px">alb.ingress.kubernetes.io/target-type</div>
<div class="t" style="left:457.50px;top:364.50px;font-size:9.0px;font-weight:400;color:#000000;font-family:'Liberation Mono',monospace;letter-spacing:-0.4px;-webkit-text-stroke:0.15px">:</div>
<div class="t" style="left:467.50px;top:364.50px;font-size:9.0px;font-weight:400;color:#0451a5;font-family:'Liberation Mono',monospace;letter-spacing:-0.4px;-webkit-text-stroke:0.15px">ip</div>
<div class="t" style="left:221.60px;top:377.00px;font-size:9.0px;font-weight:400;color:#237893;font-family:'Liberation Mono',monospace;letter-spacing:-0.4px;-webkit-text-stroke:0.15px">117</div>
<div class="t" style="left:272.50px;top:377.00px;font-size:9.0px;font-weight:400;color:#008080;font-family:'Liberation Mono',monospace;letter-spacing:-0.4px;-webkit-text-stroke:0.15px">alb.ingress.kubernetes.io/group.name</div>
<div class="t" style="left:452.50px;top:377.00px;font-size:9.0px;font-weight:400;color:#000000;font-family:'Liberation Mono',monospace;letter-spacing:-0.4px;-webkit-text-stroke:0.15px">:</div>
<div class="t" style="left:462.50px;top:377.00px;font-size:9.0px;font-weight:400;color:#0451a5;font-family:'Liberation Mono',monospace;letter-spacing:-0.4px;-webkit-text-stroke:0.15px">same-load</div>
<div class="t" style="left:221.60px;top:389.50px;font-size:9.0px;font-weight:400;color:#237893;font-family:'Liberation Mono',monospace;letter-spacing:-0.4px;-webkit-text-stroke:0.15px">118</div>
<div class="t" style="left:262.50px;top:389.50px;font-size:9.0px;font-weight:400;color:#008080;font-family:'Liberation Mono',monospace;letter-spacing:-0.4px;-webkit-text-stroke:0.15px">className</div>
<div class="t" style="left:307.50px;top:389.50px;font-size:9.0px;font-weight:400;color:#000000;font-family:'Liberation Mono',monospace;letter-spacing:-0.4px;-webkit-text-stroke:0.15px">:</div>
<div class="t" style="left:317.50px;top:389.50px;font-size:9.0px;font-weight:400;color:#0451a5;font-family:'Liberation Mono',monospace;letter-spacing:-0.4px;-webkit-text-stroke:0.15px">alb</div>
<div class="t" style="left:221.60px;top:402.00px;font-size:9.0px;font-weight:400;color:#237893;font-family:'Liberation Mono',monospace;letter-spacing:-0.4px;-webkit-text-stroke:0.15px">119</div>
<div class="t" style="left:262.50px;top:402.00px;font-size:9.0px;font-weight:400;color:#008080;font-family:'Liberation Mono',monospace;letter-spacing:-0.4px;-webkit-text-stroke:0.15px">enabled</div>
<div class="t" style="left:297.50px;top:402.00px;font-size:9.0px;font-weight:400;color:#000000;font-family:'Liberation Mono',monospace;letter-spacing:-0.4px;-webkit-text-stroke:0.15px">:</div>
<div class="t" style="left:307.50px;top:402.00px;font-size:9.0px;font-weight:400;color:#0000ff;font-family:'Liberation Mono',monospace;letter-spacing:-0.4px;-webkit-text-stroke:0.15px">true</div>
<div class="t" style="left:221.60px;top:414.50px;font-size:9.0px;font-weight:400;color:#237893;font-family:'Liberation Mono',monospace;letter-spacing:-0.4px;-webkit-text-stroke:0.15px">120</div>
<div class="t" style="left:262.50px;top:414.50px;font-size:9.0px;font-weight:400;color:#008080;font-family:'Liberation Mono',monospace;letter-spacing:-0.4px;-webkit-text-stroke:0.15px">hosts</div>
<div class="t" style="left:287.50px;top:414.50px;font-size:9.0px;font-weight:400;color:#000000;font-family:'Liberation Mono',monospace;letter-spacing:-0.4px;-webkit-text-stroke:0.15px">:</div>
<div class="t" style="left:221.60px;top:427.00px;font-size:9.0px;font-weight:400;color:#237893;font-family:'Liberation Mono',monospace;letter-spacing:-0.4px;-webkit-text-stroke:0.15px">121</div>
<div class="t" style="left:272.50px;top:427.00px;font-size:9.0px;font-weight:400;color:#000000;font-family:'Liberation Mono',monospace;letter-spacing:-0.4px;-webkit-text-stroke:0.15px">-</div>
<div class="t" style="left:282.50px;top:427.00px;font-size:9.0px;font-weight:400;color:#008080;font-family:'Liberation Mono',monospace;letter-spacing:-0.4px;-webkit-text-stroke:0.15px">host</div>
<div class="t" style="left:302.50px;top:427.00px;font-size:9.0px;font-weight:400;color:#000000;font-family:'Liberation Mono',monospace;letter-spacing:-0.4px;-webkit-text-stroke:0.15px">:</div>
<div class="t" style="left:312.50px;top:427.00px;font-size:9.0px;font-weight:400;color:#0451a5;font-family:'Liberation Mono',monospace;letter-spacing:-0.4px;-webkit-text-stroke:0.15px">myapp.devtron.info</div>
<div class="t" style="left:221.60px;top:439.50px;font-size:9.0px;font-weight:400;color:#237893;font-family:'Liberation Mono',monospace;letter-spacing:-0.4px;-webkit-text-stroke:0.15px">122</div>
<div class="t" style="left:282.50px;top:439.50px;font-size:9.0px;font-weight:400;color:#008080;font-family:'Liberation Mono',monospace;letter-spacing:-0.4px;-webkit-text-stroke:0.15px">pathType</div>
<div class="t" style="left:322.50px;top:439.50px;font-size:9.0px;font-weight:400;color:#000000;font-family:'Liberation Mono',monospace;letter-spacing:-0.4px;-webkit-text-stroke:0.15px">:</div>
<div class="t" style="left:332.50px;top:439.50px;font-size:9.0px;font-weight:400;color:#0451a5;font-family:'Liberation Mono',monospace;letter-spacing:-0.4px;-webkit-text-stroke:0.15px">Prefix</div>
<div class="t" style="left:221.60px;top:452.00px;font-size:9.0px;font-weight:400;color:#237893;font-family:'Liberation Mono',monospace;letter-spacing:-0.4px;-webkit-text-stroke:0.15px">123</div>
<div class="t" style="left:282.50px;top:452.00px;font-size:9.0px;font-weight:400;color:#008080;font-family:'Liberation Mono',monospace;letter-spacing:-0.4px;-webkit-text-stroke:0.15px">paths</div>
<div class="t" style="left:307.50px;top:452.00px;font-size:9.0px;font-weight:400;color:#000000;font-family:'Liberation Mono',monospace;letter-spacing:-0.4px;-webkit-text-stroke:0.15px">:</div>
<div class="t" style="left:221.60px;top:464.50px;font-size:9.0px;font-weight:400;color:#237893;font-family:'Liberation Mono',monospace;letter-spacing:-0.4px;-webkit-text-stroke:0.15px">124</div>
<div class="t" style="left:292.50px;top:464.50px;font-size:9.0px;font-weight:400;color:#000000;font-family:'Liberation Mono',monospace;letter-spacing:-0.4px;-webkit-text-stroke:0.15px">-</div>
<div class="t" style="left:302.50px;top:464.50px;font-size:9.0px;font-weight:400;color:#0451a5;font-family:'Liberation Mono',monospace;letter-spacing:-0.4px;-webkit-text-stroke:0.15px">/</div>
<div class="t" style="left:221.60px;top:477.00px;font-size:9.0px;font-weight:400;color:#237893;font-family:'Liberation Mono',monospace;letter-spacing:-0.4px;-webkit-text-stroke:0.15px">125</div>
<div class="t" style="left:262.50px;top:477.00px;font-size:9.0px;font-weight:400;color:#008080;font-family:'Liberation Mono',monospace;letter-spacing:-0.4px;-webkit-text-stroke:0.15px">labels</div>
<div class="t" style="left:292.50px;top:477.00px;font-size:9.0px;font-weight:400;color:#000000;font-family:'Liberation Mono',monospace;letter-spacing:-0.4px;-webkit-text-stroke:0.15px">:</div>
<div class="t" style="left:302.50px;top:477.00px;font-size:9.0px;font-weight:400;color:#000000;font-family:'Liberation Mono',monospace;letter-spacing:-0.4px;-webkit-text-stroke:0.15px">{}</div>
<div class="t" style="left:221.60px;top:489.50px;font-size:9.0px;font-weight:400;color:#237893;font-family:'Liberation Mono',monospace;letter-spacing:-0.4px;-webkit-text-stroke:0.15px">126</div>
<div class="t" style="left:262.50px;top:489.50px;font-size:9.0px;font-weight:400;color:#008080;font-family:'Liberation Mono',monospace;letter-spacing:-0.4px;-webkit-text-stroke:0.15px">tls</div>
<div class="t" style="left:277.50px;top:489.50px;font-size:9.0px;font-weight:400;color:#000000;font-family:'Liberation Mono',monospace;letter-spacing:-0.4px;-webkit-text-stroke:0.15px">:</div>
<div class="t" style="left:287.50px;top:489.50px;font-size:9.0px;font-weight:400;color:#000000;font-family:'Liberation Mono',monospace;letter-spacing:-0.4px;-webkit-text-stroke:0.15px">[]</div>
<div class="t" style="left:221.60px;top:502.00px;font-size:9.0px;font-weight:400;color:#237893;font-family:'Liberation Mono',monospace;letter-spacing:-0.4px;-webkit-text-stroke:0.15px">127</div>
<div class="t" style="left:252.50px;top:502.00px;font-size:9.0px;font-weight:400;color:#008080;font-family:'Liberation Mono',monospace;letter-spacing:-0.4px;-webkit-text-stroke:0.15px">ingressInternal</div>
<div class="t" style="left:327.50px;top:502.00px;font-size:9.0px;font-weight:400;color:#000000;font-family:'Liberation Mono',monospace;letter-spacing:-0.4px;-webkit-text-stroke:0.15px">:</div>
<div class="abs" style="left:542.5px;top:299.2px;width:1px;height:12.5px;background:#000"></div>
<div class="abs" style="left:990px;top:125px;width:1px;height:388px;background:#eeeeee"></div>
<div class="abs" style="left:990.5px;top:287px;width:9.5px;height:50.5px;background:rgba(100,100,100,.4)"></div>
<div class="abs" style="left:990.5px;top:309.5px;width:9.5px;height:1.2px;background:#333"></div>
<div class="abs" style="left:991px;top:318px;width:4px;height:4px;background:#888"></div>
<div class="abs" style="left:242px;top:272.5px;width:484px;height:206.5px;border:2px solid #6f22a0"></div>
<div class="abs" style="left:216px;top:513px;width:784px;height:53px;background:#fff;border-top:1px solid #dfe3e8"></div>
<div class="abs" style="left:231.4px;top:526.3px;width:10.6px;height:10.4px;border:1px solid #a9b0b7;border-radius:2px;background:#fff"></div>
<div class="t" style="left:253.00px;top:527.90px;font-size:9.8px;font-weight:700;color:#000a14;letter-spacing:-0.354px;">Show application metrics</div>
<div class="t" style="left:367.80px;top:527.90px;font-size:10px;font-weight:400;color:#0066cc;letter-spacing:-0.127px;-webkit-text-stroke:0.18px currentColor;">Learn more</div>
<div class="t" style="left:253.00px;top:545.50px;font-size:10px;font-weight:400;color:#3b444c;letter-spacing:-0.278px;-webkit-text-stroke:0.18px currentColor;">Capture and show key application metrics over time. (E.g. Status codes 2xx, 3xx, 5xx; throughput and latency).</div>
<div class="abs" style="left:899px;top:528px;width:87px;height:25px;background:#0066cc;border-radius:4px"></div>
<div class="t" style="left:914.80px;top:537.30px;font-size:9px;font-weight:700;color:#fff;letter-spacing:-0.503px;">Save Changes</div>
</body></html>
